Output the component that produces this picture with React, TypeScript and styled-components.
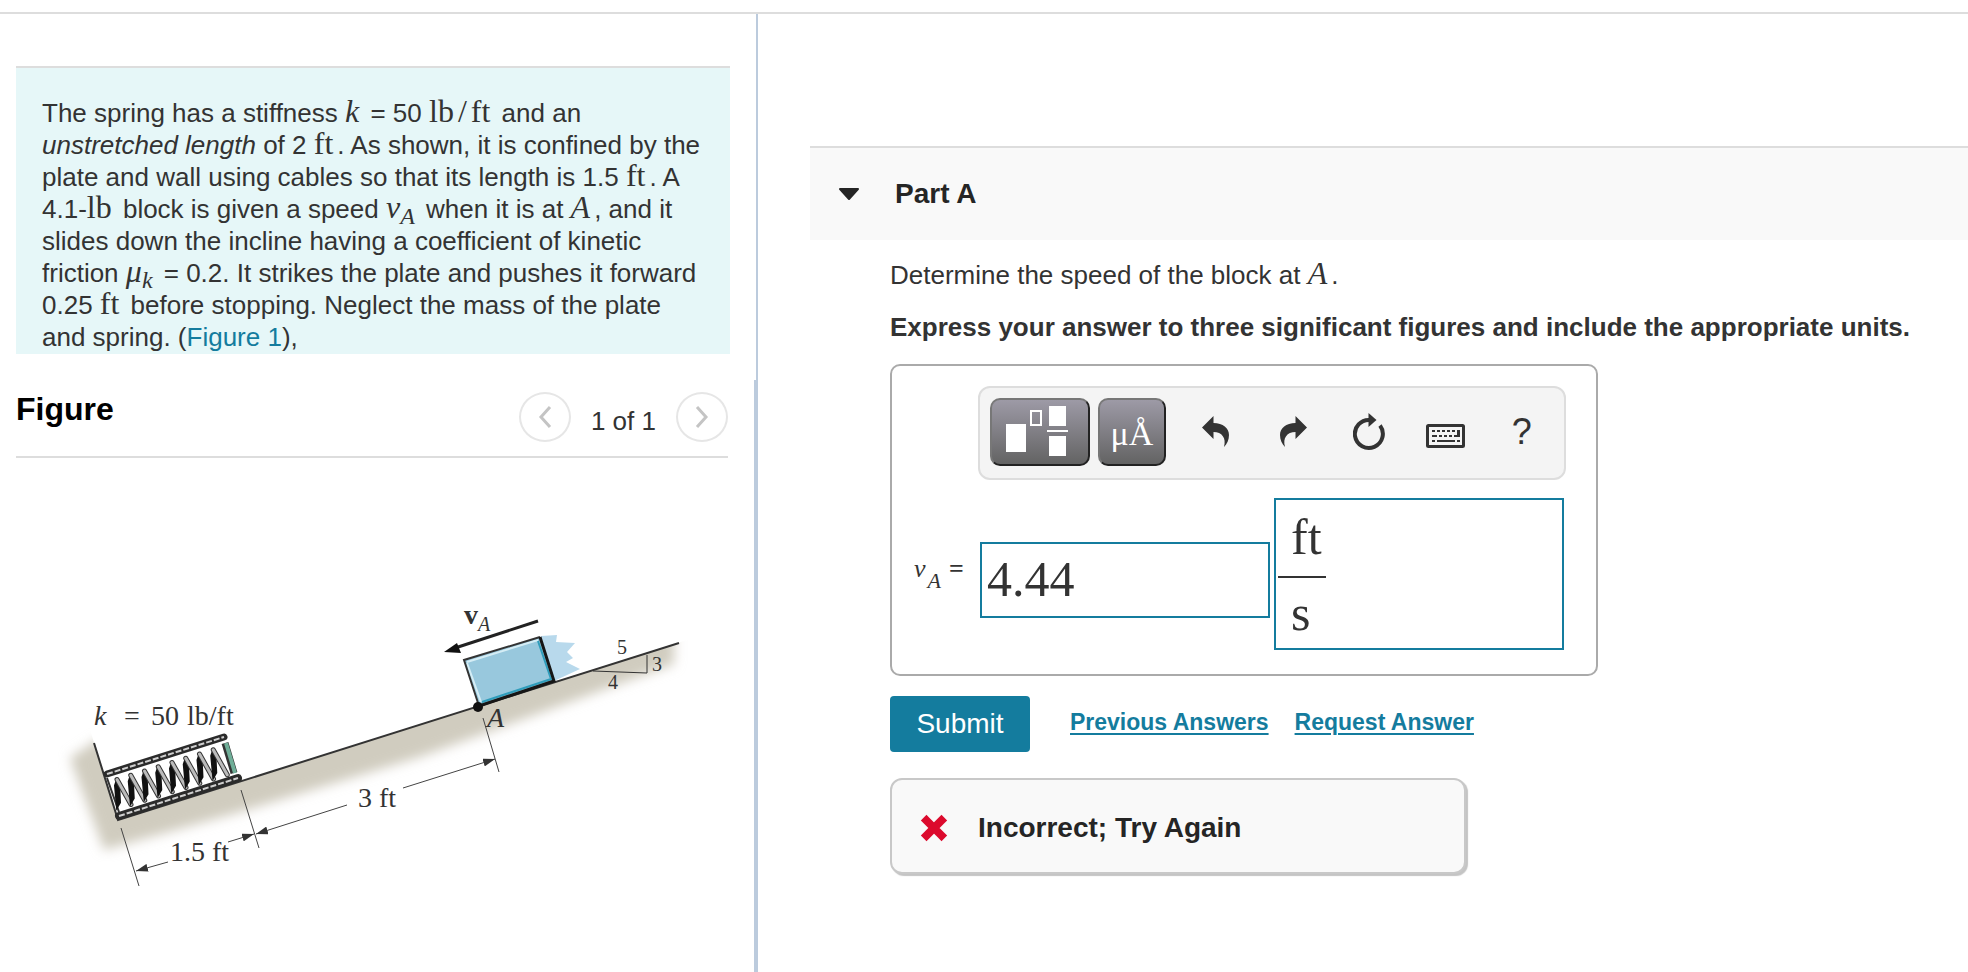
import React from "react";
import styled, { createGlobalStyle } from "styled-components";

const sans = `"Liberation Sans", Arial, Helvetica, sans-serif`;
const serif = `"Liberation Serif", "Times New Roman", serif`;
const teal = "#147c9e";

const GlobalStyle = createGlobalStyle`
  * { box-sizing: border-box; }
  body {
    margin: 0;
    background: #fff;
    color: #333;
    font-family: ${sans};
    font-size: 26px;
    line-height: 32px;
  }
  button { font-family: inherit; cursor: pointer; }
  h1, h2, p { margin: 0; }
`;

const Page = styled.div`
  display: flex;
  flex-direction: column;
  min-height: 100vh;
`;

const TopBar = styled.header`
  height: 14px;
  border-bottom: 2px solid #ddd;
`;

const Columns = styled.main`
  flex: 1;
  display: grid;
  grid-template-columns: 379fr 605fr;
`;

const ProblemColumn = styled.section`
  display: flex;
  flex-direction: column;
  min-width: 0;
`;

const StatementArea = styled.div`
  padding: 52px 26px 26px 16px;
  border-right: 2px solid #bccbdd;
`;

const Statement = styled.div`
  padding: 29px 20px 1px 26px;
  border-top: 2px solid #ddd;
  background: #e6f7f8;
`;

const MathText = styled.span<{ $italic?: boolean }>`
  display: inline-block;
  padding-right: 4px;
  font-family: ${serif};
  font-size: 32px;
  font-style: ${(p) => (p.$italic ? "italic" : "normal")};
  line-height: 28px;
`;

const Sub = styled.sub`
  font-size: 24px;
  line-height: 1px;
  vertical-align: -6px;
`;

const FigureLink = styled.a`
  color: ${teal};
  text-decoration: none;
`;

const FigureArea = styled.div`
  flex: 1;
  padding: 12px 26px 0 16px;
  border-right: 4px solid #bccbdd;
`;

const FigureHeader = styled.div`
  display: flex;
  align-items: center;
  justify-content: space-between;
  padding-bottom: 14px;
  border-bottom: 2px solid #ddd;
`;

const FigureTitle = styled.h2`
  padding-bottom: 16px;
  color: #000;
  font-size: 32px;
  line-height: 34px;
`;

const Pager = styled.div`
  display: flex;
  align-items: center;
  gap: 20px;
`;

const PagerLabel = styled.span`
  padding-top: 8px;
`;

const PagerButton = styled.button`
  display: flex;
  align-items: center;
  justify-content: center;
  width: 52px;
  height: 50px;
  padding: 0;
  border: 2px solid #e6e6e6;
  border-radius: 50%;
  background: #fff;
`;

const Drawing = styled.svg`
  display: block;
  width: 100%;
  height: auto;
  font-family: ${serif};
  fill: #333;
`;

const AnswerColumn = styled.section`
  min-width: 0;
  padding: 132px 0 40px 52px;
`;

const PartHeader = styled.div`
  display: flex;
  align-items: center;
  gap: 35px;
  height: 94px;
  padding-left: 28px;
  border-top: 2px solid #ddd;
  background: #f9f9f9;
`;

const Collapse = styled.button`
  display: flex;
  padding: 0;
  border: 0;
  background: none;
`;

const PartTitle = styled.h1`
  color: #252525;
  font-size: 28px;
  line-height: 32px;
`;

const PartBody = styled.div`
  display: flex;
  flex-direction: column;
  align-items: flex-start;
  padding: 19px 20px 0 80px;
`;

const Instruction = styled.p`
  margin: 20px 0 21px;
  font-weight: bold;
`;

const AnswerBox = styled.form`
  width: 708px;
  max-width: 100%;
  padding: 20px 30px 24px 22px;
  border: 2px solid #aaa;
  border-radius: 10px;
`;

const Toolbar = styled.div`
  display: flex;
  align-items: center;
  gap: 8px;
  height: 94px;
  margin-left: 64px;
  padding: 0 4px 2px 10px;
  border: 2px solid #ddd;
  border-radius: 12px;
  background: #f4f4f4;
`;

const PaletteButton = styled.button<{ $wide?: boolean }>`
  display: flex;
  align-items: center;
  justify-content: center;
  width: ${(p) => (p.$wide ? "100px" : "68px")};
  height: 68px;
  padding: ${(p) => (p.$wide ? "0 6px 2px 0" : "4px 0 0")};
  border: 2px solid;
  border-color: #777 #222 #222 #777;
  border-radius: 10px;
  background: linear-gradient(#9d9aa6, #636363);
  color: #fff;
  font-family: ${serif};
  font-size: 34px;
`;

const Tools = styled.div`
  flex: 1;
  display: flex;
  padding-left: 4px;
`;

const ToolButton = styled.button`
  flex: 1;
  display: flex;
  align-items: center;
  justify-content: center;
  height: 68px;
  padding: 0;
  border: 0;
  background: none;
  color: #333;
  font-size: 36px;
`;

const FieldRow = styled.div`
  display: flex;
  align-items: center;
  gap: 4px;
  padding-top: 18px;
`;

const ValueGroup = styled.div`
  display: flex;
  align-items: center;
  padding-top: 12px;
`;

const FieldLabel = styled.label`
  width: 66px;
  padding-bottom: 22px;
  font-family: ${serif};
  font-size: 26px;
  white-space: nowrap;
`;

const LabelSub = styled.sub`
  padding-left: 2px;
  font-size: 22px;
  line-height: 1px;
  vertical-align: -11px;
`;

const Equals = styled.span`
  padding-left: 8px;
  font-weight: bold;
`;

const ValueInput = styled.input`
  width: 290px;
  height: 76px;
  padding: 0 5px 2px;
  border: 2px solid ${teal};
  background: #fff;
  color: #333;
  font-family: ${serif};
  font-size: 50px;
`;

const UnitBox = styled.div`
  width: 290px;
  height: 152px;
  padding: 2px;
  border: 2px solid ${teal};
  font-family: ${serif};
  font-size: 50px;
`;

const Fraction = styled.span`
  display: inline-flex;
  flex-direction: column;
`;

const FractionPart = styled.span<{ $under?: boolean }>`
  height: ${(p) => (p.$under ? "68px" : "76px")};
  padding: 0 4px 0 13px;
  border-bottom: ${(p) => (p.$under ? "0" : "2px solid #333")};
  line-height: 70px;
`;

const Actions = styled.div`
  display: flex;
  align-items: center;
  gap: 26px;
  margin: 20px 0 26px;
`;

const Submit = styled.button`
  width: 140px;
  height: 56px;
  margin-right: 14px;
  border: 0;
  border-radius: 4px;
  background: ${teal};
  color: #fff;
  font-size: 28px;
`;

const ActionLink = styled.a`
  padding-bottom: 4px;
  color: ${teal};
  font-size: 23px;
  font-weight: bold;
  text-decoration: underline;
  text-decoration-thickness: 2px;
  text-underline-offset: 3px;
`;

const Feedback = styled.div`
  display: flex;
  align-items: center;
  gap: 30px;
  width: 576px;
  max-width: 100%;
  height: 96px;
  padding: 4px 0 0 28px;
  border: 2px solid #c8c8c8;
  border-radius: 12px;
  background: #f9f9f9;
  box-shadow: 2px 2px 1px #c4c4c4;
  color: #252525;
  font-size: 28px;
  font-weight: bold;
`;

const coils = Array.from({ length: 8 }, (_, i) => ({
  x: 117 + i * 13.75,
  y: 779.5 - i * 4.25,
}));

function Chevron({ right }: { right?: boolean }) {
  return (
    <svg width="14" height="22" viewBox="0 0 14 22" fill="none" stroke="#c4c4c4" strokeWidth="3">
      <path d={right ? "M2 1 L11 11 L2 21" : "M12 1 L3 11 L12 21"} />
    </svg>
  );
}

function Incline() {
  return (
    <Drawing viewBox="16 458 712 440" role="img" aria-label="Block sliding down an incline onto a spring">
      <defs>
        <filter id="soft" x="-10%" y="-10%" width="120%" height="120%">
          <feGaussianBlur stdDeviation="6" />
        </filter>
        <clipPath id="ground">
          <path d="M40 720 L87 720 L118 820 L690 639 L690 898 L40 898 Z" />
        </clipPath>
        <marker id="tip" viewBox="0 0 12 8" refX="12" refY="4" markerWidth="12" markerHeight="8" markerUnits="userSpaceOnUse" orient="auto">
          <path d="M0 0 L12 4 L0 8 Z" />
        </marker>
      </defs>
      <g clipPath="url(#ground)">
        <path
          d="M70 758 L100 738 L130 800 L674 630 L674 664 L420 757 L240 812 L104 850 Z"
          fill="#d0ccbf"
          filter="url(#soft)"
        />
      </g>
      <g fill="none" stroke="#333" strokeWidth="2">
        <path d="M94 743 L118 820 L679 643" />
        <path d="M593 671 L647 673 L647 655" strokeWidth="1" />
      </g>

      <g stroke="#2b2b2b" strokeLinecap="round">
        <path d="M107 774 L224 737" strokeWidth="7" />
        <path d="M119 816 L238 778" strokeWidth="8" />
        <g stroke="#d0d0d0" strokeWidth="2" strokeDasharray="6 2" strokeLinecap="butt">
          <path d="M107 774 L224 737" />
          <path d="M119 816 L238 778" />
        </g>
      </g>
      <path d="M225 743 L234 773" stroke="#333" strokeWidth="7" />
      <path d="M226 743 L235 773" stroke="#6fae98" strokeWidth="4" />
      <path d="M107 778 L119 812" stroke="#333" strokeWidth="2" />
      {coils.map((c) => (
        <g key={c.x} strokeLinecap="round">
          <path d={`M${c.x} ${c.y} l-2 6 l2 22 l3 -5 l-1 -20 Z`} fill="#111" stroke="#111" strokeWidth="2" />
          <path d={`M${c.x} ${c.y} l14 25`} stroke="#333" strokeWidth="5" />
          <path d={`M${c.x} ${c.y} l14 25`} stroke="#bbb" strokeWidth="3" />
        </g>
      ))}

      <path
        d="M541 636 L557 635 L556 642 L575 643 L567 652 L573 658 L566 662 L580 669 L554 681 Z"
        fill="#b8d9ec"
      />
      <path d="M464 660 L540 637 L554 681 L479 706 Z" fill="#98c8dd" />
      <path d="M467 662 L538 640" stroke="#d5edf5" strokeWidth="2" />
      <path d="M467 663 L481 702" stroke="#d5edf5" strokeWidth="2" />
      <path d="M538 641 L551 679 L482 702" fill="none" stroke="#2f9dbb" strokeWidth="2" />
      <path d="M479 706 L464 660 L540 637" fill="none" stroke="#333" strokeWidth="2" />
      <path d="M540 637 L554 681 L479 706" fill="none" stroke="#161616" strokeWidth="3" />
      <circle cx="478" cy="707" r="5" fill="#111" />

      <path d="M538 621 L455 648" stroke="#222" strokeWidth="3" />
      <path d="M444 652 L457 643 L461 653 Z" fill="#111" />

      <g fill="none" stroke="#444" strokeWidth="1">
        <path d="M483 718 L499 772" />
        <path d="M241 790 L259 848" />
        <path d="M121 828 L139 886" />
        <path d="M403 788 L495 759" markerEnd="url(#tip)" />
        <path d="M347 805 L256 834" markerEnd="url(#tip)" />
        <path d="M228 842 L254 834" markerEnd="url(#tip)" />
        <path d="M168 862 L136 871" markerEnd="url(#tip)" />
      </g>

      <g fontSize="28">
        <text x="94" y="725" fontStyle="italic">k</text>
        <text x="124" y="725">=</text>
        <text x="151" y="725">50</text>
        <text x="187" y="725">lb/ft</text>
        <text x="358" y="807">3 ft</text>
        <text x="170" y="861">1.5 ft</text>
        <text x="487" y="727" fontStyle="italic">A</text>
        <text x="464" y="624" fontWeight="bold">v</text>
      </g>
      <g fontSize="20">
        <text x="478" y="631" fontStyle="italic">A</text>
        <text x="617" y="654">5</text>
        <text x="608" y="689">4</text>
        <text x="652" y="671">3</text>
      </g>
    </Drawing>
  );
}

const bentArrow = "M0 11.5 L11.5 0 V7 C21 7 27 12 27 19 C27 24 25 28 22 31 C24.5 22 20 16 11.5 16 V23 Z";

export default function App() {
  return (
    <Page>
      <GlobalStyle />
      <TopBar />
      <Columns>
        <ProblemColumn>
          <StatementArea>
            <Statement>
              <p>
                The spring has a stiffness <MathText $italic>k</MathText> = 50{" "}
                <MathText>lb</MathText><MathText>/</MathText><MathText>ft</MathText> and an <em>unstretched length</em> of 2{" "}
                <MathText>ft</MathText>. As shown, it is confined by the plate and wall using cables so
                that its length is 1.5 <MathText>ft</MathText>. A 4.1-<MathText>lb</MathText> block is
                given a speed <MathText $italic>v<Sub>A</Sub></MathText> when it is at{" "}
                <MathText $italic>A</MathText>, and it slides down the incline having a coefficient of
                kinetic friction <MathText $italic>μ<Sub>k</Sub></MathText> = 0.2. It strikes the plate
                and pushes it forward 0.25 <MathText>ft</MathText> before stopping. Neglect the mass of
                the plate and spring. (<FigureLink href="#figure">Figure 1</FigureLink>),
              </p>
            </Statement>
          </StatementArea>
          <FigureArea id="figure">
            <FigureHeader>
              <FigureTitle>Figure</FigureTitle>
              <Pager>
                <PagerButton type="button" aria-label="Previous figure"><Chevron /></PagerButton>
                <PagerLabel>1 of 1</PagerLabel>
                <PagerButton type="button" aria-label="Next figure"><Chevron right /></PagerButton>
              </Pager>
            </FigureHeader>
            <Incline />
          </FigureArea>
        </ProblemColumn>

        <AnswerColumn>
          <PartHeader>
            <Collapse type="button" aria-label="Collapse Part A">
              <svg width="22" height="14" viewBox="0 0 22 14">
                <path d="M2 2 H20 L11 12 Z" fill="#252525" stroke="#252525" strokeWidth="2" strokeLinejoin="round" />
              </svg>
            </Collapse>
            <PartTitle>Part A</PartTitle>
          </PartHeader>
          <PartBody>
            <p>
              Determine the speed of the block at <MathText $italic>A</MathText>.
            </p>
            <Instruction>
              Express your answer to three significant figures and include the appropriate units.
            </Instruction>
            <AnswerBox onSubmit={(e) => e.preventDefault()} id="answer">
              <Toolbar>
                <PaletteButton $wide type="button" aria-label="Templates">
                  <svg width="64" height="52" viewBox="0 0 64 52" fill="#fff">
                    <rect x="1" y="19" width="20" height="28" />
                    <rect x="26" y="6" width="10" height="14" fill="none" stroke="#fff" strokeWidth="2" />
                    <rect x="44" y="1" width="17" height="20" />
                    <rect x="42" y="25" width="21" height="2" />
                    <rect x="44" y="31" width="17" height="20" />
                  </svg>
                </PaletteButton>
                <PaletteButton type="button" aria-label="Symbols">μÅ</PaletteButton>
                <Tools>
                  <ToolButton type="button" aria-label="Undo">
                    <svg width="28" height="32" viewBox="0 0 28 32"><path d={bentArrow} fill="#333" /></svg>
                  </ToolButton>
                  <ToolButton type="button" aria-label="Redo">
                    <svg width="28" height="32" viewBox="0 0 28 32">
                      <path d={bentArrow} fill="#333" transform="translate(28 0) scale(-1 1)" />
                    </svg>
                  </ToolButton>
                  <ToolButton type="button" aria-label="Reset">
                    <svg width="32" height="38" viewBox="0 0 32 38">
                      <path d="M17 7 A14 14 0 1 0 27 12.5" fill="none" stroke="#333" strokeWidth="4" />
                      <path d="M15.5 0 L23.5 7 L15.5 14 Z" fill="#333" />
                    </svg>
                  </ToolButton>
                  <ToolButton type="button" aria-label="Keyboard">
                    <svg width="39" height="32" viewBox="0 0 39 32" fill="#333">
                      <rect x="1.5" y="9.5" width="36" height="21" rx="1" fill="none" stroke="#333" strokeWidth="3" />
                      {[6, 11, 16, 21, 26].map((x) => <rect key={x} x={x} y="14" width="3" height="2" />)}
                      <rect x="6" y="19" width="5" height="2" />
                      {[13, 18, 23].map((x) => <rect key={x} x={x} y="19" width="3" height="2" />)}
                      <path d="M31 14 h3 v7 h-6 v-2 h3 Z" />
                      <rect x="6" y="24" width="3" height="2" />
                      <rect x="11" y="24" width="18" height="2" />
                      <rect x="31" y="24" width="3" height="2" />
                    </svg>
                  </ToolButton>
                  <ToolButton type="button" aria-label="Help">?</ToolButton>
                </Tools>
              </Toolbar>
              <FieldRow>
                <ValueGroup>
                  <FieldLabel htmlFor="value">
                    <i>v</i><LabelSub><i>A</i></LabelSub><Equals>=</Equals>
                  </FieldLabel>
                  <ValueInput id="value" type="text" defaultValue="4.44" />
                </ValueGroup>
                <UnitBox role="textbox" aria-label="Units" tabIndex={0}>
                  <Fraction>
                    <FractionPart>ft</FractionPart>
                    <FractionPart $under>s</FractionPart>
                  </Fraction>
                </UnitBox>
              </FieldRow>
            </AnswerBox>
            <Actions>
              <Submit type="submit" form="answer">Submit</Submit>
              <ActionLink href="#previous">Previous Answers</ActionLink>
              <ActionLink href="#request">Request Answer</ActionLink>
            </Actions>
            <Feedback role="status">
              <svg width="28" height="28" viewBox="0 0 28 28" stroke="#dc0a2d" strokeWidth="8" strokeLinecap="square">
                <path d="M6.500 6.500 L21.500 21.500 M21.500 6.500 L6.500 21.500" />
              </svg>
              Incorrect; Try Again
            </Feedback>
          </PartBody>
        </AnswerColumn>
      </Columns>
    </Page>
  );
}
